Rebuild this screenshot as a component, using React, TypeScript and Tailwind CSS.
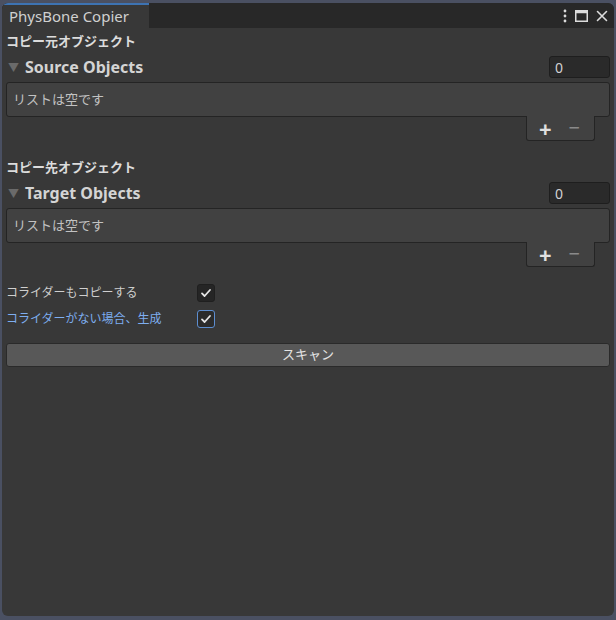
import type { ReactNode } from "react";

const JP = { fontFamily: '"Noto Sans", "Noto Sans CJK JP", sans-serif' };

function Check({ blue = false }: { blue?: boolean }) {
  return (
    <div
      className={
        "flex h-[18px] w-[18px] items-center justify-center rounded-[3px] border " +
        (blue ? "border-[#5d8ed0] bg-[#2b2b2b]" : "border-[#1f1f1f] bg-[#252525]")
      }
    >
      <svg width="12" height="12" viewBox="0 0 12 12" fill="none">
        <path d="M2 6.4 4.6 9 10 3" stroke="#e6e6e6" strokeWidth="1.8" strokeLinecap="round" strokeLinejoin="round" />
      </svg>
    </div>
  );
}

function ListSection({ heading, label }: { heading: string; label: string }) {
  return (
    <div>
      <div className="flex h-[20px] items-center text-[13px] font-bold text-[#dcdcdc]">{heading}</div>
      <div className="mt-[3px] flex h-[24px] items-center">
        <span className="ml-[2px] text-[11px] leading-none text-[#6a6a6a]">▼</span>
        <span className="ml-[6px] text-[16px] font-bold text-[#d4d4d4]">{label}</span>
        <div className="ml-auto flex h-[22px] w-[61px] items-center rounded-[3px] border border-[#1e1e1e] bg-[#2a2a2a] pl-[5px] text-[14px] text-[#d2d2d2]">
          0
        </div>
      </div>
      <div className="mt-[3px] flex h-[35px] items-center rounded-[3px] border border-[#242424] bg-[#414141] pl-[6px] text-[13px] text-[#c2c2c2]">
        リストは空です
      </div>
      <div className="flex justify-end pr-[15px]">
        <div className="-mt-[1px] flex h-[25px] w-[69px] items-center justify-between rounded-b-[3px] border border-t-0 border-[#242424] bg-[#414141] pl-[12px] pr-[14px]">
          <span className="text-[22px] font-bold leading-none text-[#e0e0e0]">+</span>
          <span className="text-[20px] leading-none text-[#8a8a8a]">−</span>
        </div>
      </div>
    </div>
  );
}

function Row({ children, blue = false }: { children: ReactNode; blue?: boolean }) {
  return (
    <div className="flex h-[26px] items-center">
      <span className={"w-[191px] text-[12px] " + (blue ? "text-[#7eaef0]" : "text-[#cfcfcf]")}>{children}</span>
      <Check blue={blue} />
    </div>
  );
}

export default function App() {
  return (
    <div className="h-[620px] w-[616px] bg-[#4a5062] pt-[3px]" style={JP}>
      <div className="mx-[2px] flex h-[613px] flex-col overflow-hidden rounded-[6px] bg-[#383838]">
        <div className="flex h-[25px] shrink-0 items-stretch bg-[#282828]">
          <div className="flex w-[147px] items-center border-t-2 border-[#3d73b3] bg-[#383838] pl-[7px] text-[15px] text-[#d0d0d0]">
            PhysBone Copier
          </div>
          <div className="ml-auto flex items-center gap-[8px] pr-[6px] text-[#dcdcdc]">
            <svg width="4" height="14" viewBox="0 0 4 14">
              <circle cx="2" cy="2" r="1.4" fill="#dcdcdc" />
              <circle cx="2" cy="7" r="1.4" fill="#dcdcdc" />
              <circle cx="2" cy="12" r="1.4" fill="#dcdcdc" />
            </svg>
            <svg width="13" height="12" viewBox="0 0 13 12" fill="none">
              <rect x="0.75" y="0.75" width="11.5" height="10.5" stroke="#dcdcdc" strokeWidth="1.5" />
              <rect x="0.75" y="0.75" width="11.5" height="2.5" fill="#dcdcdc" />
            </svg>
            <svg width="12" height="12" viewBox="0 0 12 12">
              <path d="M1.5 1.5 10.5 10.5M10.5 1.5 1.5 10.5" stroke="#dcdcdc" strokeWidth="1.6" strokeLinecap="round" />
            </svg>
          </div>
        </div>

        <div className="flex flex-col px-[4px] pt-[4px]">
          <ListSection heading="コピー元オブジェクト" label="Source Objects" />
          <div className="mt-[17px]">
            <ListSection heading="コピー先オブジェクト" label="Target Objects" />
          </div>
          <div className="mt-[13px]">
            <Row>コライダーもコピーする</Row>
            <Row blue>コライダーがない場合、生成</Row>
          </div>
          <button className="mt-[11px] flex h-[24px] items-center justify-center rounded-[3px] border border-[#2a2a2a] bg-[#585858] text-[13px] text-[#e4e4e4]">
            スキャン
          </button>
        </div>
      </div>
    </div>
  );
}
